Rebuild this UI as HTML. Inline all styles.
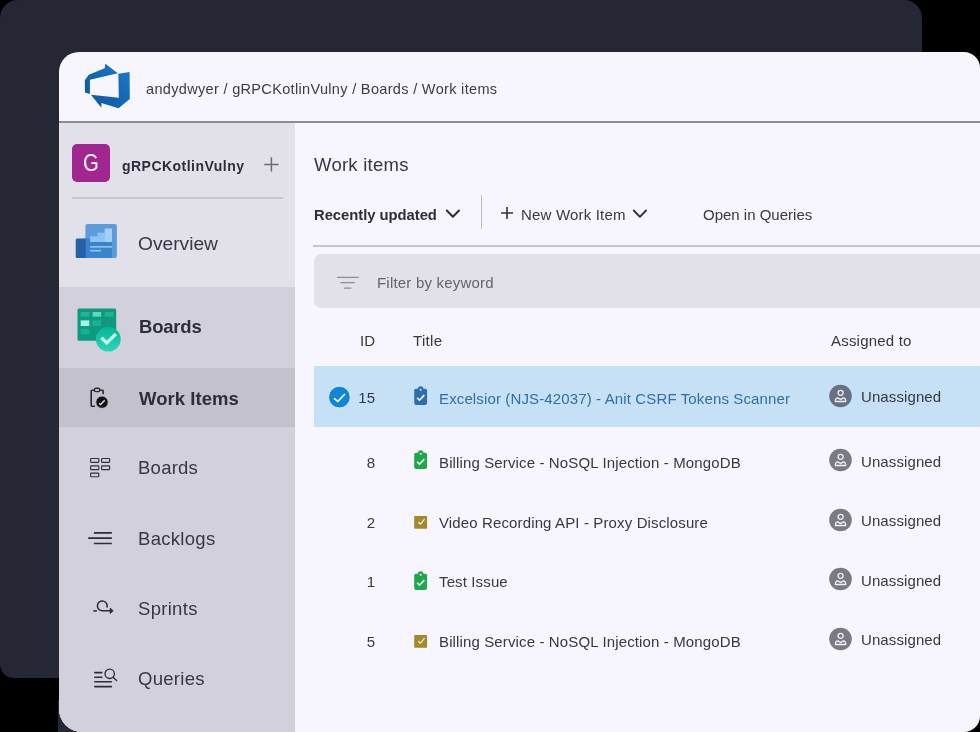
<!DOCTYPE html>
<html><head><meta charset="utf-8">
<style>
html,body{margin:0;padding:0;}
body{width:980px;height:732px;position:relative;overflow:hidden;background:#000;font-family:"Liberation Sans",sans-serif;}
.a{position:absolute;}
.t{position:absolute;line-height:1;white-space:nowrap;color:#363846;will-change:transform;}
svg{position:absolute;overflow:visible;}
</style></head><body>
<!-- dark back card -->
<div class="a" style="left:0;top:0;width:921.5px;height:678px;background:#252734;border-radius:18px 18px 14px 14px;"></div>
<div class="a" style="left:58px;top:700px;width:30px;height:32px;background:#252734;"></div>
<!-- light card -->
<div class="a" id="card" style="left:59.4px;top:52px;width:920.6px;height:680px;background:#f7f5fe;border-radius:20px 16px 16px 23px;overflow:hidden;">
  <div class="a" style="left:0;top:71px;width:235.6px;height:609px;background:#e2e1ea;">
    <div class="a" style="left:0;top:164px;width:236px;height:450px;background:#d2d0db;"></div>
    <div class="a" style="left:0;top:245px;width:236px;height:59px;background:#c3c1cc;"></div>
  </div>
  <div class="a" style="left:0;top:69px;width:921px;height:2px;background:#8b8a96;"></div>
</div>

<!-- logo -->
<svg style="left:80px;top:60px;" width="55" height="52" viewBox="80 60 55 52">
  <defs><linearGradient id="lg" gradientUnits="userSpaceOnUse" x1="85" y1="108" x2="130" y2="64"><stop offset="0" stop-color="#0a54a0"/><stop offset="1" stop-color="#1e7ac7"/></linearGradient></defs>
  <path fill="url(#lg)" d="M117.8 73.2L105.3 63.8L104.7 68.2L88.75 74.7L84.8 80.25L85 92.6L89.9 94.1L89.95 79.7Z M129.6 72.05L129.8 99L118.5 108.3L101.4 102.9L101.4 107.8L90.9 94.8L118.8 97.75L118.35 73.8Z"/>
</svg>
<div class="t" style="left:145.5px;top:82.1px;font-size:14.5px;letter-spacing:0.33px;color:#3b3c48;">andydwyer / gRPCKotlinVulny / Boards / Work items</div>

<!-- project -->
<div class="a" style="left:71.8px;top:144.2px;width:38.2px;height:38.2px;background:#a1268f;border-radius:5px;"></div>
<div class="t" style="left:72px;top:143.5px;width:38px;height:38px;line-height:38px;text-align:center;font-size:23.5px;color:#fff;transform:scaleX(0.86);">G</div>
<div class="t" style="left:122.4px;top:158.9px;font-size:14px;font-weight:bold;letter-spacing:0.47px;color:#2c2e3b;">gRPCKotlinVulny</div>
<svg style="left:263.5px;top:157.3px;" width="15" height="15" viewBox="0 0 15 15"><path d="M7.4 0.3V14.6M0.3 7.45H14.6" stroke="#6a6a76" stroke-width="1.5"/></svg>
<div class="a" style="left:72px;top:197px;width:211px;height:1.5px;background:#c9c8d1;"></div>

<!-- overview icon -->
<svg style="left:75px;top:223px;" width="43" height="36" viewBox="0 0 43 36">
  <rect x="10.4" y="1" width="31.5" height="34" rx="2" fill="#5d9cdc"/>
  <rect x="0.7" y="15.4" width="12" height="19.6" rx="1.5" fill="#2461a8"/>
  <rect x="10.7" y="15.4" width="26.3" height="19.6" fill="#3a84cc"/>
  <path d="M15.1 19V13.2H22.4V9.8H29.8V5.7H37V19Z" fill="#8cc3f0"/>
  <rect x="29.8" y="5.7" width="7.2" height="13.3" fill="#a2d0f6"/>
  <rect x="15.1" y="23" width="21.9" height="1.7" fill="#8cc3f0"/>
  <rect x="15.1" y="26.8" width="11" height="1.7" fill="#8cc3f0"/>
</svg>
<div class="t" style="left:138.2px;top:234.4px;font-size:19.2px;color:#363846;">Overview</div>

<!-- boards big icon -->
<svg style="left:77px;top:308px;" width="48" height="46" viewBox="0 0 48 46">
  <rect x="0.5" y="0.5" width="38.7" height="32.2" rx="1.5" fill="#0f9a80"/>
  <rect x="3.7" y="4" width="8.6" height="4.7" fill="#1db598"/>
  <rect x="15.6" y="4" width="8.5" height="4.7" fill="#5fd8bb"/>
  <rect x="27.8" y="4" width="8.4" height="4.7" fill="#1db598"/>
  <rect x="3.7" y="12.4" width="8.6" height="5.6" fill="#a6f5e6"/>
  <rect x="15.6" y="12.4" width="8.5" height="5.6" fill="#13b597"/>
  <rect x="3.7" y="20.9" width="8.6" height="5.5" fill="#10b595"/>
  <defs><linearGradient id="cg" x1="0" y1="0" x2="0" y2="1"><stop offset="0" stop-color="#04b496"/><stop offset="1" stop-color="#2fd6b8"/></linearGradient></defs>
  <circle cx="31.3" cy="31.2" r="12.4" fill="url(#cg)"/>
  <path d="M24.4 29.8L29.7 35L38.9 26" fill="none" stroke="#c6f8ef" stroke-width="3.3"/>
</svg>
<div class="t" style="left:138.6px;top:317.8px;font-size:18.5px;letter-spacing:-0.2px;font-weight:bold;color:#2c2e3b;">Boards</div>

<!-- work items icon -->
<svg style="left:84px;top:382px;" width="30" height="30" viewBox="0 0 30 30">
  <path d="M19.1 12.3V8.8Q19.1 8.2 18.4 8.2H15.8M10.3 8.2H7.8Q7.2 8.2 7.2 8.9V23.5Q7.2 24.2 7.9 24.2H11" fill="none" stroke="#2b2c33" stroke-width="1.6"/>
  <rect x="10.3" y="6.2" width="5.5" height="3.4" rx="1.7" fill="none" stroke="#2b2c33" stroke-width="1.4"/>
  <circle cx="18" cy="20.2" r="6.1" fill="#111" stroke="#c5c3ce" stroke-width="0.7"/>
  <path d="M15.1 21.2L16.6 22.5L20.7 18.2" fill="none" stroke="#d8d8d8" stroke-width="1.5"/>
</svg>
<div class="t" style="left:139.3px;top:390px;font-size:18.5px;letter-spacing:0.05px;font-weight:bold;color:#2c2e3b;">Work Items</div>

<!-- boards small -->
<svg style="left:88px;top:456px;" width="24" height="24" viewBox="0 0 24 24" fill="none" stroke="#30313a" stroke-width="1.15">
  <rect x="2.6" y="2.5" width="8.2" height="3.8" rx="0.7"/>
  <rect x="13.6" y="2.5" width="8" height="3.8" rx="0.7"/>
  <rect x="2.6" y="9.8" width="8.2" height="3.8" rx="0.7"/>
  <rect x="13.6" y="9.8" width="8" height="3.8" rx="0.7"/>
  <rect x="2.6" y="17.1" width="8.2" height="3.6" rx="0.7"/>
</svg>
<div class="t" style="left:138.4px;top:458.5px;font-size:18.5px;letter-spacing:0.25px;">Boards</div>

<!-- backlogs -->
<svg style="left:86px;top:528px;" width="28" height="20" viewBox="0 0 28 20" stroke="#2b2c36" stroke-width="1.7">
  <path d="M7.9 4.8H25.8M2.2 10.2H25.8M7.9 15.5H25.8"/>
</svg>
<div class="t" style="left:138.4px;top:529.8px;font-size:18.5px;letter-spacing:0.3px;">Backlogs</div>

<!-- sprints -->
<svg style="left:88px;top:596px;" width="30" height="20" viewBox="0 0 30 20" fill="none" stroke="#2b2c36" stroke-width="1.5">
  <path d="M5.3 14.9H8.9"/>
  <path d="M18.9 11.6A4.9 4.9 0 1 0 14.5 14.8H23"/>
  <path d="M22.2 12.1L25.2 14.8L22.2 17.6Z" fill="#2b2c36" stroke-width="0.8" stroke-linejoin="round"/>
</svg>
<div class="t" style="left:138.4px;top:599.5px;font-size:18.5px;letter-spacing:0.3px;">Sprints</div>

<!-- queries -->
<svg style="left:90px;top:664px;" width="30" height="26" viewBox="0 0 30 26" fill="none" stroke="#2b2c36" stroke-width="1.6" stroke-linecap="round">
  <path d="M4.8 8.6H11.8M4.8 13.2H11.8M4.8 17.8H21.4M4.8 22.6H21.4"/>
  <circle cx="19.7" cy="9.8" r="4.7" stroke-width="1.3"/>
  <path d="M23 13.3L26.6 16.6" stroke-width="1.4"/>
</svg>
<div class="t" style="left:138.4px;top:670.2px;font-size:18.5px;letter-spacing:0.3px;">Queries</div>

<!-- main -->
<div class="t" style="left:313.7px;top:156px;font-size:18.5px;letter-spacing:0.25px;color:#363846;">Work items</div>
<div class="t" style="left:313.5px;top:207.5px;font-size:14.8px;letter-spacing:-0.03px;font-weight:bold;color:#2c2e3b;">Recently updated</div>
<svg style="left:445.5px;top:208.5px;" width="14" height="10" viewBox="0 0 14 10"><path d="M0.8 1.5L6.9 7.8L13 1.5" fill="none" stroke="#2c2e3b" stroke-width="2" stroke-linecap="round" stroke-linejoin="round"/></svg>
<div class="a" style="left:481px;top:195px;width:1.2px;height:33.5px;background:#bdbcc5;"></div>
<svg style="left:500px;top:205px;" width="14" height="16" viewBox="0 0 14 16"><path d="M7 2V14M1 8H13" stroke="#30313a" stroke-width="1.6"/></svg>
<div class="t" style="left:520.6px;top:206.6px;font-size:15px;letter-spacing:0.18px;color:#363846;">New Work Item</div>
<svg style="left:632.5px;top:208.5px;" width="14" height="10" viewBox="0 0 14 10"><path d="M0.8 1.5L6.9 7.8L13 1.5" fill="none" stroke="#30313a" stroke-width="1.9" stroke-linecap="round" stroke-linejoin="round"/></svg>
<div class="t" style="left:702.7px;top:206.6px;font-size:15px;color:#363846;">Open in Queries</div>
<div class="a" style="left:313.2px;top:244.9px;width:667px;height:1.8px;background:#c6c5ce;"></div>

<div class="a" style="left:313.6px;top:254.3px;width:680px;height:54.2px;background:#e2e1ea;border-radius:7px;"></div>
<svg style="left:334px;top:272px;" width="26" height="20" viewBox="0 0 26 20" stroke="#8c8b96" stroke-width="1.15"><path d="M3.1 5.3H24.7M6.5 10.6H20.9M9.9 16.1H17.4"/></svg>
<div class="t" style="left:376.5px;top:274.6px;font-size:15px;letter-spacing:0.2px;color:#63636d;">Filter by keyword</div>

<div class="t" style="left:360px;top:333.2px;font-size:15px;color:#363846;">ID</div>
<div class="t" style="left:412.5px;top:333.2px;font-size:15px;letter-spacing:0.3px;color:#363846;">Title</div>
<div class="t" style="left:831px;top:333.2px;font-size:15px;letter-spacing:0.2px;color:#363846;">Assigned to</div>

<!-- selected row -->
<div class="a" style="left:313.6px;top:366.3px;width:680px;height:60.8px;background:#c6e0f5;"></div>
<svg style="left:326px;top:384px;" width="27" height="27" viewBox="0 0 27 27">
  <circle cx="13.4" cy="13.1" r="10.9" fill="#0f86d8" stroke="#eef5fc" stroke-width="0.9"/>
  <path d="M8 14.3L11.9 17.4L18.9 10" fill="none" stroke="#fff" stroke-width="1.7"/>
</svg>

<!--ROWS-->
<div class="t" style="left:338.5px;top:390.0px;width:36px;text-align:right;font-size:15px;color:#363846;">15</div>
<svg style="left:413px;top:384.6px;" width="16" height="21" viewBox="0 0 16 21"><rect x="1.2" y="3.8" width="12.9" height="16.1" rx="1.8" fill="#2e6ea8"/><path d="M4.9 5.5V3.9A2.75 2.75 0 0 1 10.4 3.9V5.5Z" fill="#2e6ea8"/><circle cx="7.65" cy="4.7" r="1.05" fill="#c6e0f5"/><path d="M4.1 12.7L6.5 15.2L11.3 10.1" fill="none" stroke="#fff" stroke-width="1.6"/></svg>
<div class="t" style="left:438.7px;top:391.0px;font-size:15px;letter-spacing:0.13px;color:#306fa8;">Excelsior (NJS-42037) - Anit CSRF Tokens Scanner</div>
<svg style="left:826px;top:381.9px;" width="30" height="28" viewBox="0 0 30 28"><circle cx="14.5" cy="14" r="11.3" fill="#687184"/><circle cx="14.6" cy="10.8" r="2.5" fill="none" stroke="#f1f1f4" stroke-width="1.3"/><path d="M9.4 19.5C9.4 17 10.5 15.8 11.9 15.8L14.6 17.6L17.3 15.8C18.7 15.8 19.7 17 19.7 19.5Z" fill="none" stroke="#f1f1f4" stroke-width="1.3" stroke-linejoin="round"/></svg>
<div class="t" style="left:861px;top:388.7px;font-size:15px;letter-spacing:0.1px;color:#363846;">Unassigned</div>
<div class="t" style="left:338.5px;top:455.1px;width:36px;text-align:right;font-size:15px;color:#363846;">8</div>
<svg style="left:413px;top:449.4px;" width="16" height="21" viewBox="0 0 16 21"><rect x="1.2" y="3.8" width="12.9" height="16.1" rx="1.8" fill="#1fa84a"/><path d="M4.9 5.5V3.9A2.75 2.75 0 0 1 10.4 3.9V5.5Z" fill="#1fa84a"/><circle cx="7.65" cy="4.7" r="1.05" fill="#f7f5fe"/><path d="M4.1 12.7L6.5 15.2L11.3 10.1" fill="none" stroke="#fff" stroke-width="1.6"/></svg>
<div class="t" style="left:438.7px;top:455.4px;font-size:15px;letter-spacing:0.13px;color:#363846;">Billing Service - NoSQL Injection - MongoDB</div>
<svg style="left:826px;top:446.4px;" width="30" height="28" viewBox="0 0 30 28"><circle cx="14.5" cy="14" r="11.3" fill="#7a7a84"/><circle cx="14.6" cy="10.8" r="2.5" fill="none" stroke="#f1f1f4" stroke-width="1.3"/><path d="M9.4 19.5C9.4 17 10.5 15.8 11.9 15.8L14.6 17.6L17.3 15.8C18.7 15.8 19.7 17 19.7 19.5Z" fill="none" stroke="#f1f1f4" stroke-width="1.3" stroke-linejoin="round"/></svg>
<div class="t" style="left:861px;top:453.8px;font-size:15px;letter-spacing:0.1px;color:#363846;">Unassigned</div>
<div class="t" style="left:338.5px;top:514.6px;width:36px;text-align:right;font-size:15px;color:#363846;">2</div>
<svg style="left:413px;top:514.6px;" width="16" height="16" viewBox="0 0 16 16"><rect x="1.2" y="1" width="12.9" height="12.8" rx="0.8" fill="#a08a2b"/><path d="M5.2 7.2L7.5 9.1L11.6 4.2" fill="none" stroke="#f3eedb" stroke-width="1.3"/></svg>
<div class="t" style="left:438.7px;top:514.9px;font-size:15px;letter-spacing:0.13px;color:#363846;">Video Recording API - Proxy Disclosure</div>
<svg style="left:826px;top:505.9px;" width="30" height="28" viewBox="0 0 30 28"><circle cx="14.5" cy="14" r="11.3" fill="#7a7a84"/><circle cx="14.6" cy="10.8" r="2.5" fill="none" stroke="#f1f1f4" stroke-width="1.3"/><path d="M9.4 19.5C9.4 17 10.5 15.8 11.9 15.8L14.6 17.6L17.3 15.8C18.7 15.8 19.7 17 19.7 19.5Z" fill="none" stroke="#f1f1f4" stroke-width="1.3" stroke-linejoin="round"/></svg>
<div class="t" style="left:861px;top:513.3px;font-size:15px;letter-spacing:0.1px;color:#363846;">Unassigned</div>
<div class="t" style="left:338.5px;top:574.1px;width:36px;text-align:right;font-size:15px;color:#363846;">1</div>
<svg style="left:413px;top:570.0px;" width="16" height="21" viewBox="0 0 16 21"><rect x="1.2" y="3.8" width="12.9" height="16.1" rx="1.8" fill="#1fa84a"/><path d="M4.9 5.5V3.9A2.75 2.75 0 0 1 10.4 3.9V5.5Z" fill="#1fa84a"/><circle cx="7.65" cy="4.7" r="1.05" fill="#f7f5fe"/><path d="M4.1 12.7L6.5 15.2L11.3 10.1" fill="none" stroke="#fff" stroke-width="1.6"/></svg>
<div class="t" style="left:438.7px;top:574.4px;font-size:15px;letter-spacing:0.13px;color:#363846;">Test Issue</div>
<svg style="left:826px;top:565.4px;" width="30" height="28" viewBox="0 0 30 28"><circle cx="14.5" cy="14" r="11.3" fill="#7a7a84"/><circle cx="14.6" cy="10.8" r="2.5" fill="none" stroke="#f1f1f4" stroke-width="1.3"/><path d="M9.4 19.5C9.4 17 10.5 15.8 11.9 15.8L14.6 17.6L17.3 15.8C18.7 15.8 19.7 17 19.7 19.5Z" fill="none" stroke="#f1f1f4" stroke-width="1.3" stroke-linejoin="round"/></svg>
<div class="t" style="left:861px;top:572.8px;font-size:15px;letter-spacing:0.1px;color:#363846;">Unassigned</div>
<div class="t" style="left:338.5px;top:633.6px;width:36px;text-align:right;font-size:15px;color:#363846;">5</div>
<svg style="left:413px;top:633.5px;" width="16" height="16" viewBox="0 0 16 16"><rect x="1.2" y="1" width="12.9" height="12.8" rx="0.8" fill="#a08a2b"/><path d="M5.2 7.2L7.5 9.1L11.6 4.2" fill="none" stroke="#f3eedb" stroke-width="1.3"/></svg>
<div class="t" style="left:438.7px;top:633.9px;font-size:15px;letter-spacing:0.13px;color:#363846;">Billing Service - NoSQL Injection - MongoDB</div>
<svg style="left:826px;top:624.9px;" width="30" height="28" viewBox="0 0 30 28"><circle cx="14.5" cy="14" r="11.3" fill="#7a7a84"/><circle cx="14.6" cy="10.8" r="2.5" fill="none" stroke="#f1f1f4" stroke-width="1.3"/><path d="M9.4 19.5C9.4 17 10.5 15.8 11.9 15.8L14.6 17.6L17.3 15.8C18.7 15.8 19.7 17 19.7 19.5Z" fill="none" stroke="#f1f1f4" stroke-width="1.3" stroke-linejoin="round"/></svg>
<div class="t" style="left:861px;top:632.3px;font-size:15px;letter-spacing:0.1px;color:#363846;">Unassigned</div>
<!--/ROWS-->
</body></html>
